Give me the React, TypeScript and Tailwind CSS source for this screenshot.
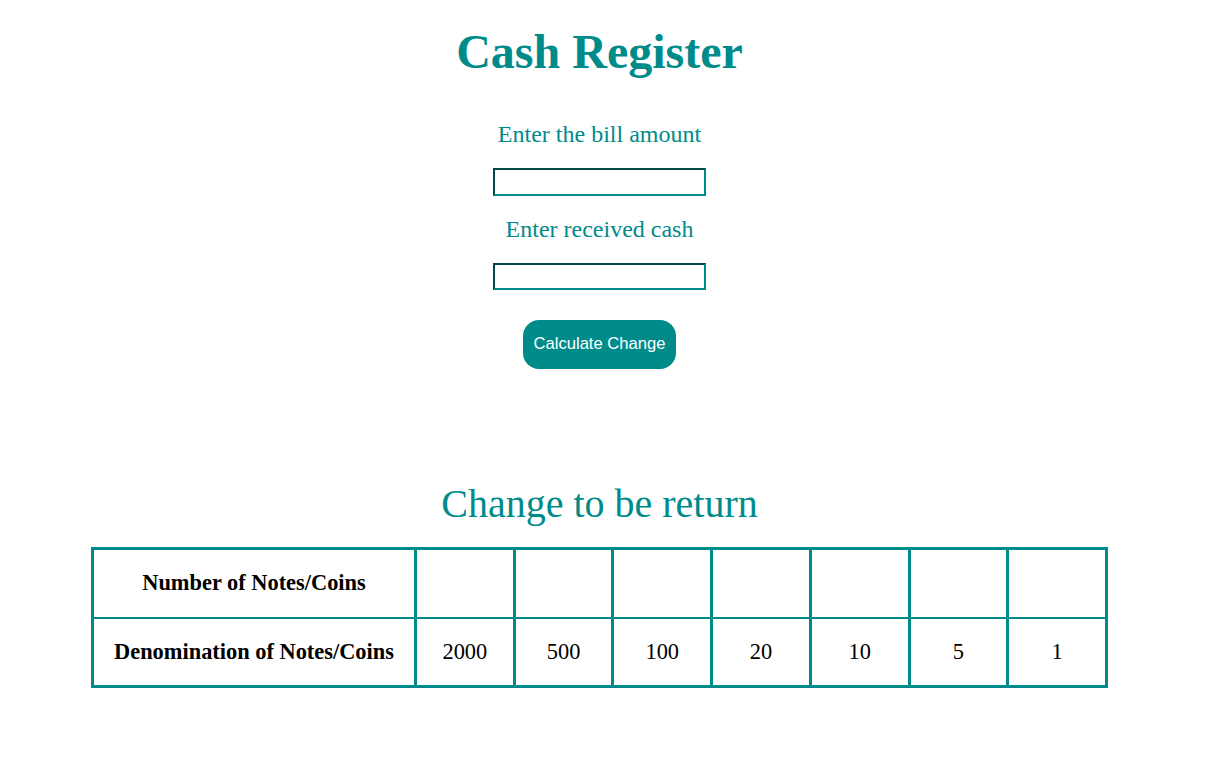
import React, { useState } from "react";

const notes = [2000, 500, 100, 20, 10, 5, 1];

const App: React.FC = () => {
  const [bill, setBill] = useState("");
  const [cash, setCash] = useState("");

  return (
    <div className="w-[1199px] bg-white font-['Liberation_Serif',serif] text-center">
      <h1 className="pt-[24px] text-[48px] font-bold leading-[56px] text-[#008b8b]">
        Cash Register
      </h1>

      <label className="block mt-[40px] text-[24px] leading-[28px] text-[#008b8b]">
        Enter the bill amount
      </label>
      <input
        value={bill}
        onChange={(e) => setBill(e.target.value)}
        className="mt-[20px] block mx-auto w-[213px] h-[28px] border-2 border-t-[#024545] border-l-[#024545] border-b-[#008b8b] border-r-[#008b8b] outline-none px-1"
      />

      <label className="block mt-[19px] text-[24px] leading-[28px] text-[#008b8b]">
        Enter received cash
      </label>
      <input
        value={cash}
        onChange={(e) => setCash(e.target.value)}
        className="mt-[20px] block mx-auto w-[213px] h-[27px] border-2 border-t-[#024545] border-l-[#024545] border-b-[#008b8b] border-r-[#008b8b] outline-none px-1"
      />

      {/* Calculate button */}
      <button className="mt-[30px] w-[153px] h-[49px] rounded-[16px] bg-[#008b8b] text-white font-['Liberation_Sans',Arial,sans-serif] text-[16.6px]">
        Calculate Change
      </button>

      <h2 className="mt-[112px] text-[40px] leading-[46px] text-[#008b8b]">
        Change to be return
      </h2>

      <table className="mt-[20px] ml-[91px] w-[1017px] table-fixed border-collapse border-[3px] border-[#008b8b] text-[22.4px] text-black">
        <tbody>
          <tr className="h-[69px]">
            <th className="w-[323px] border-x-[3px] border-y-2 border-[#008b8b] font-bold">Number of Notes/Coins</th>
            {notes.map((n) => (
              <td key={n} className="border-x-[3px] border-y-2 border-[#008b8b]"></td>
            ))}
          </tr>
          <tr className="h-[69px]">
            <th className="w-[323px] border-x-[3px] border-y-2 border-[#008b8b] font-bold">Denomination of Notes/Coins</th>
            {notes.map((n) => (
              <td key={n} className="border-x-[3px] border-y-2 border-[#008b8b]">
                {n}
              </td>
            ))}
          </tr>
        </tbody>
      </table>
    </div>
  );
};

export default App;
